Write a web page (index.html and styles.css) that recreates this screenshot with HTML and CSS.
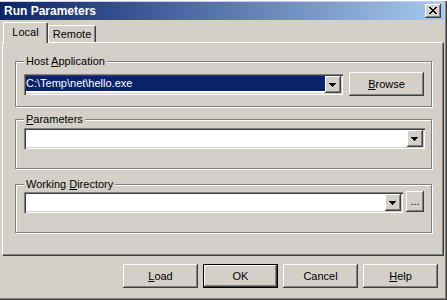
FILE: index.html
```html
<!DOCTYPE html>
<html>
<head>
<meta charset="utf-8">
<link rel="stylesheet" href="styles.css">
</head>
<body>
<div class="window">
  <div class="titlebar">
    <span class="title">Run Parameters</span>
    <div class="close">
      <svg width="8" height="7" viewBox="0 0 8 7" shape-rendering="crispEdges">
        <rect x="0" y="0" width="2" height="1"/><rect x="6" y="0" width="2" height="1"/>
        <rect x="1" y="1" width="2" height="1"/><rect x="5" y="1" width="2" height="1"/>
        <rect x="2" y="2" width="4" height="1"/>
        <rect x="3" y="3" width="2" height="1"/>
        <rect x="2" y="4" width="4" height="1"/>
        <rect x="1" y="5" width="2" height="1"/><rect x="5" y="5" width="2" height="1"/>
        <rect x="0" y="6" width="2" height="1"/><rect x="6" y="6" width="2" height="1"/>
      </svg>
    </div>
  </div>
  <div class="client">
    <div class="tabs">
      <div class="tab active">Local</div>
      <div class="tab inactive">Remote</div>
    </div>
    <div class="panel">
      <div class="group g-host">
        <div class="legend">Host <u>A</u>pplication</div>
        <div class="row">
          <div class="field combo-host">
            <div class="edit"><span class="sel">C:\Temp\net\hello.exe</span></div>
            <div class="drop"><svg width="7" height="4" viewBox="0 0 7 4" shape-rendering="crispEdges"><rect x="0" y="0" width="7" height="1"/><rect x="1" y="1" width="5" height="1"/><rect x="2" y="2" width="3" height="1"/><rect x="3" y="3" width="1" height="1"/></svg></div>
          </div>
          <div class="btn browse"><u>B</u>rowse</div>
        </div>
      </div>
      <div class="group g-params">
        <div class="legend"><u>P</u>arameters</div>
        <div class="row">
          <div class="field combo-params">
            <div class="edit"></div>
            <div class="drop"><svg width="7" height="4" viewBox="0 0 7 4" shape-rendering="crispEdges"><rect x="0" y="0" width="7" height="1"/><rect x="1" y="1" width="5" height="1"/><rect x="2" y="2" width="3" height="1"/><rect x="3" y="3" width="1" height="1"/></svg></div>
          </div>
        </div>
      </div>
      <div class="group g-work">
        <div class="legend">Working <u>D</u>irectory</div>
        <div class="row">
          <div class="field combo-work">
            <div class="edit"></div>
            <div class="drop"><svg width="7" height="4" viewBox="0 0 7 4" shape-rendering="crispEdges"><rect x="0" y="0" width="7" height="1"/><rect x="1" y="1" width="5" height="1"/><rect x="2" y="2" width="3" height="1"/><rect x="3" y="3" width="1" height="1"/></svg></div>
          </div>
          <div class="btn dots">...</div>
        </div>
      </div>
    </div>
    <div class="buttons">
      <div class="btn"><u>L</u>oad</div>
      <div class="btn default">OK</div>
      <div class="btn">Cancel</div>
      <div class="btn"><u>H</u>elp</div>
    </div>
  </div>
</div>
</body>
</html>
```

FILE: styles.css
```css
* { box-sizing: border-box; }
html, body { margin: 0; padding: 0; background: #d4d0c8; }
body {
  font-family: "Liberation Sans", Arial, sans-serif;
  font-size: 11px;
  color: #000;
}
.window {
  width: 447px;
  height: 300px;
  background: #d4d0c8;
  padding: 2px 3px 3px 0;
  box-shadow: inset 0 1px #ffffff, inset -1px -1px #404040, inset -2px -2px #808080;
}
.titlebar {
  height: 18px;
  background: linear-gradient(to right, #0a246a, #a6caf0);
  display: flex;
  align-items: center;
  justify-content: space-between;
  padding: 0 3px 0 4px;
}
.title {
  color: #fff;
  font-weight: bold;
  font-size: 12px;
}
.close {
  width: 16px;
  height: 14px;
  background: #d4d0c8;
  box-shadow: inset -1px -1px #404040, inset 1px 1px #ffffff, inset -2px -2px #808080;
  display: flex;
  align-items: center;
  justify-content: center;
  padding: 0 1px 1px 0;
}
.client {
  padding: 2px 0 0 2px;
}
.tabs {
  display: flex;
  align-items: flex-end;
  height: 20px;
  padding-left: 1px;
  position: relative;
  z-index: 1;
}
.tab {
  background: #d4d0c8;
  border-top: 1px solid #fff;
  border-left: 1px solid #fff;
  border-right: 1px solid #404040;
  box-shadow: inset -1px 0 #808080;
  border-top-left-radius: 2px;
  border-top-right-radius: 2px;
  display: flex;
  justify-content: center;
}
.tab.active {
  width: 45px;
  height: 21px;
  margin-bottom: -1px;
  padding-top: 3px;
}
.tab.inactive {
  width: 48px;
  height: 17px;
  padding-top: 2px;
}
.panel {
  width: 442px;
  height: 214px;
  border-top: 1px solid #fff;
  border-left: 1px solid #fff;
  border-right: 1px solid #404040;
  border-bottom: 1px solid #404040;
  box-shadow: inset -1px -1px #808080;
  padding: 18px 0 0 12px;
}
.group {
  width: 417px;
  border: 1px solid #808080;
  box-shadow: inset 1px 1px #fff, 1px 1px #fff;
  padding: 0 0 0 8px;
}
.legend {
  width: fit-content;
  margin: -7px 0 0 0;
  padding: 0 2px;
  line-height: 13px;
  background: #d4d0c8;
}
.g-host { height: 46px; }
.g-params { height: 50px; margin-top: 12px; }
.g-work { height: 49px; margin-top: 15px; }
.row {
  display: flex;
  align-items: flex-start;
}
.g-host .row { margin-top: 4px; }
.g-params .row { margin-top: 2px; }
.g-work .row { margin-top: 0px; }
.field {
  height: 21px;
  background: #fff;
  box-shadow: inset 1px 1px #808080, inset 2px 2px #404040, inset -1px -1px #fff, inset -2px -2px #d4d0c8;
  padding: 2px;
  display: flex;
}
.combo-host { width: 319px; margin-top: 2px; }
.combo-params { width: 401px; }
.combo-work { width: 379px; margin-top: 1px; }
.edit {
  flex: 1;
  display: flex;
  align-items: flex-start;
}
.sel {
  display: block;
  flex: 1;
  background: #0a246a;
  color: #fff;
  height: 15px;
  line-height: 15px;
}
.drop {
  width: 16px;
  height: 17px;
  background: #d4d0c8;
  box-shadow: inset -1px -1px #404040, inset 1px 1px #ffffff, inset -2px -2px #808080;
  display: flex;
  align-items: center;
  justify-content: center;
  padding: 0 1px 0 0;
}
.btn {
  width: 75px;
  height: 24px;
  background: #d4d0c8;
  box-shadow: inset -1px -1px #404040, inset 1px 1px #ffffff, inset -2px -2px #808080;
  display: flex;
  align-items: center;
  justify-content: center;
}
.browse { margin-left: 6px; }
.dots {
  width: 18px;
  height: 21px;
  margin-left: 3px;
  padding-bottom: 2px;
}
.default {
  border: 1px solid #000;
}
.buttons {
  display: flex;
  justify-content: flex-end;
  gap: 5px;
  padding-right: 6px;
  margin-top: 8px;
}
u { text-decoration: underline; text-underline-offset: 1px; }
```
